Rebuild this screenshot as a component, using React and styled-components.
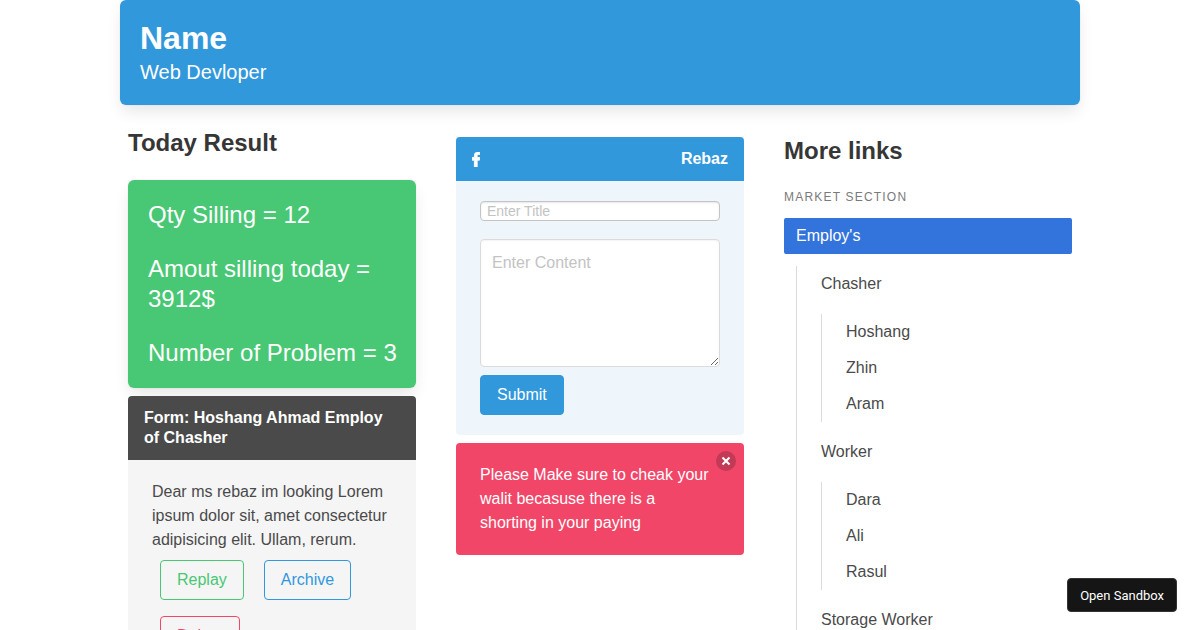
import React from 'react';
import styled, { createGlobalStyle } from 'styled-components';

const colors = {
  info: '#3298dc',
  infoLight: '#eef6fc',
  success: '#48c774',
  danger: '#f14668',
  link: '#3273dc',
  text: '#4a4a4a',
  title: '#363636',
  light: '#f5f5f5',
  border: '#dbdbdb',
};

const GlobalStyle = createGlobalStyle`
  *, *::before, *::after {
    box-sizing: border-box;
  }
  html {
    scrollbar-width: none;
  }
  body {
    margin: 0;
    background: #fff;
    color: ${colors.text};
    font-family: "Liberation Sans", Arial, sans-serif;
    font-size: 16px;
    line-height: 24px;
  }
  h1, h2, p, ul {
    margin: 0;
    padding: 0;
  }
  button, input, textarea {
    margin: 0;
    font-family: inherit;
  }
`;

const Container = styled.div`
  max-width: 960px;
  margin: 0 auto;
`;

const Box = styled.div`
  padding: 20px;
  border-radius: 6px;
  background-color: ${({ color }) => colors[color]};
  color: #fff;
  box-shadow: 0 8px 16px -2px rgba(10, 10, 10, 0.1), 0 0 0 1px rgba(10, 10, 10, 0.02);
`;

const Name = styled.h1`
  font-size: 32px;
  line-height: 36px;
`;

const Job = styled.p`
  margin-top: 4px;
  font-size: 20px;
  line-height: 25px;
`;

const Columns = styled.main`
  display: grid;
  grid-template-columns: repeat(3, minmax(0, 1fr));
  gap: 40px;
  align-items: start;
  padding: 24px 8px;
`;

const Column = styled.section`
  display: flex;
  flex-direction: column;
  gap: 8px;
  padding-top: ${({ $lowered }) => ($lowered ? '8px' : 0)};
`;

const Title = styled.h2`
  margin-bottom: 16px;
  color: ${colors.title};
  font-size: 24px;
  line-height: 27px;
`;

const Results = styled(Box)`
  display: flex;
  flex-direction: column;
  gap: 24px;
  padding-right: 12px;
  font-size: 24px;
  line-height: 30px;
`;

const Message = styled.article`
  border-radius: 4px;
  background-color: ${({ color }) => colors[color]};
`;

const MessageHeader = styled.header`
  display: flex;
  align-items: center;
  justify-content: space-between;
  padding: 12px 16px;
  border-radius: 4px 4px 0 0;
  background-color: ${({ color }) => colors[color]};
  color: #fff;
  font-weight: 700;
  line-height: 20px;
`;

const MessageBody = styled.div`
  padding: 20px 24px;
`;

const Buttons = styled.div`
  display: flex;
  flex-wrap: wrap;
  gap: 16px 20px;
  padding: 8px;
`;

const Button = styled.button`
  height: 40px;
  padding: 0 16px;
  border: 1px solid ${({ color }) => colors[color]};
  border-radius: 4px;
  background-color: ${({ color, $outlined }) => ($outlined ? 'transparent' : colors[color])};
  color: ${({ color, $outlined }) => ($outlined ? colors[color] : '#fff')};
  font-size: 16px;
  line-height: 24px;
  cursor: pointer;
`;

const PostForm = styled.form`
  display: flex;
  flex-direction: column;
  align-items: flex-start;
  gap: 8px;
`;

const TitleInput = styled.input`
  width: 100%;
  height: 20px;
  margin-bottom: 10px;
  padding: 0 6px;
  border: 1px solid #c4c4c4;
  border-radius: 4px;
  background: #fff;
  box-shadow: inset 0 1px 2px rgba(10, 10, 10, 0.1);
  color: ${colors.title};
  font-size: 14px;

  &::placeholder {
    color: #c3c3c3;
  }
`;

const ContentInput = styled.textarea`
  display: block;
  width: 100%;
  height: 128px;
  padding: 11px;
  border: 1px solid ${colors.border};
  border-radius: 4px;
  background: #fff;
  box-shadow: inset 0 1px 2px rgba(10, 10, 10, 0.05);
  color: ${colors.title};
  font-size: 16px;
  line-height: 24px;
  resize: vertical;

  &::placeholder {
    color: #c3c3c3;
  }
`;

const Notification = styled.div`
  position: relative;
  padding: 20px 32px 20px 24px;
  border-radius: 4px;
  background-color: ${colors.danger};
  color: #fff;
`;

const DeleteButton = styled.button`
  position: absolute;
  top: 8px;
  right: 8px;
  width: 20px;
  height: 20px;
  padding: 0;
  border: none;
  border-radius: 50%;
  background-color: rgba(10, 10, 10, 0.2);
  cursor: pointer;

  svg {
    display: block;
  }
`;

const MenuLabel = styled.p`
  margin-bottom: 4px;
  color: #7a7a7a;
  font-size: 12px;
  line-height: 18px;
  letter-spacing: 0.1em;
  text-transform: uppercase;
`;

const MenuList = styled.ul`
  list-style: none;

  & & {
    margin: 12px;
    padding-left: 12px;
    border-left: 1px solid ${colors.border};
  }
`;

const MenuLink = styled.a`
  display: block;
  padding: 6px 12px;
  border-radius: 2px;
  background-color: ${({ $active }) => ($active ? colors.link : 'transparent')};
  color: ${({ $active }) => ($active ? '#fff' : colors.text)};
  text-decoration: none;
`;

const SandboxButton = styled.button`
  position: fixed;
  right: 23px;
  bottom: 18px;
  height: 34px;
  padding: 0 12px;
  border: 1px solid #343434;
  border-radius: 4px;
  background-color: #151515;
  color: #fff;
  font-family: Roboto, sans-serif;
  font-size: 13px;
  cursor: pointer;
`;

const menu = [
  {
    name: "Employ's",
    active: true,
    items: [
      { name: 'Chasher', items: [{ name: 'Hoshang' }, { name: 'Zhin' }, { name: 'Aram' }] },
      { name: 'Worker', items: [{ name: 'Dara' }, { name: 'Ali' }, { name: 'Rasul' }] },
      { name: 'Storage Worker' },
    ],
  },
];

const Menu = ({ items }) => (
  <MenuList>
    {items.map((item) => (
      <li key={item.name}>
        <MenuLink href="#" $active={item.active}>{item.name}</MenuLink>
        {item.items && <Menu items={item.items} />}
      </li>
    ))}
  </MenuList>
);

const FacebookIcon = () => (
  <svg width="8" height="15" viewBox="479 0 864 1664" fill="currentColor" stroke="currentColor" strokeWidth="100" aria-hidden="true">
    <path d="M1343 12v264h-157q-86 0-116 36t-30 108v189h293l-39 296h-254v759h-306v-759h-255v-296h255v-218q0-186 104-288.5t277-102.5q147 0 228 12z" />
  </svg>
);

const App = () => (
  <>
    <GlobalStyle />
    <Container>
      <Box as="header" color="info">
        <Name>Name</Name>
        <Job>Web Devloper</Job>
      </Box>
      <Columns>
        <Column>
          <Title>Today Result</Title>
          <Results color="success">
            <p>Qty Silling = 12</p>
            <p>Amout silling today = 3912$</p>
            <p>Number of Problem = 3</p>
          </Results>
          <Message color="light">
            <MessageHeader color="text">Form: Hoshang Ahmad Employ of Chasher</MessageHeader>
            <MessageBody>
              <p>Dear ms rebaz im looking Lorem ipsum dolor sit, amet consectetur adipisicing elit. Ullam, rerum.</p>
              <Buttons>
                <Button type="button" color="success" $outlined>Replay</Button>
                <Button type="button" color="info" $outlined>Archive</Button>
                <Button type="button" color="danger" $outlined>Delete</Button>
              </Buttons>
            </MessageBody>
          </Message>
        </Column>
        <Column $lowered>
          <Message color="infoLight">
            <MessageHeader color="info">
              <FacebookIcon />
              <span>Rebaz</span>
            </MessageHeader>
            <MessageBody>
              <PostForm onSubmit={(e) => e.preventDefault()}>
                <TitleInput type="text" aria-label="Title" placeholder="Enter Title" />
                <ContentInput aria-label="Content" placeholder="Enter Content" />
                <Button type="submit" color="info">Submit</Button>
              </PostForm>
            </MessageBody>
          </Message>
          <Notification>
            <DeleteButton type="button" aria-label="Close">
              <svg width="20" height="20" viewBox="0 0 20 20" stroke="#fff" strokeWidth="2">
                <path d="M6.5 6.5l7 7M13.5 6.5l-7 7" />
              </svg>
            </DeleteButton>
            Please Make sure to cheak your walit becasuse there is a shorting in your paying
          </Notification>
        </Column>
        <Column as="aside" $lowered>
          <Title>More links</Title>
          <MenuLabel>Market Section</MenuLabel>
          <Menu items={menu} />
        </Column>
      </Columns>
    </Container>
    <SandboxButton type="button">Open Sandbox</SandboxButton>
  </>
);

export default App;
